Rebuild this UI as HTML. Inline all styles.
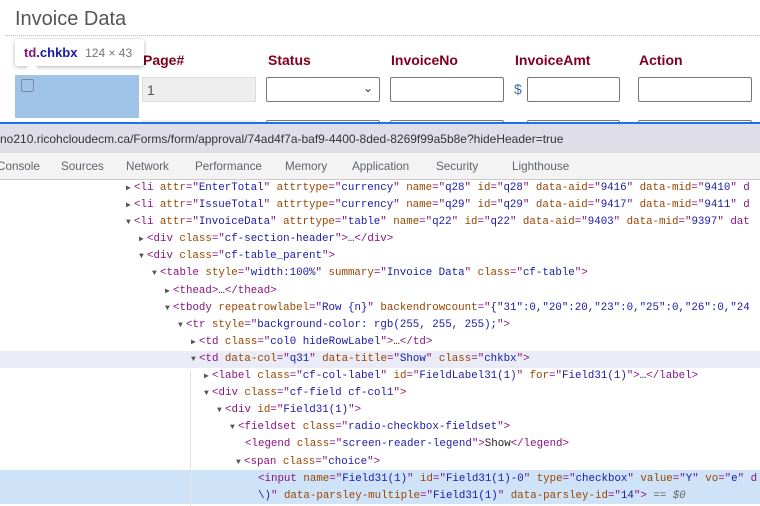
<!DOCTYPE html>
<html><head><meta charset="utf-8"><style>
*{margin:0;padding:0;box-sizing:border-box}
body{width:760px;height:506px;overflow:hidden;background:#fff;font-family:"Liberation Sans",sans-serif;position:relative}
.a{position:absolute}
h1{position:absolute;left:15px;top:8px;font-size:20px;font-weight:normal;color:#555}
.dot{position:absolute;left:5px;top:35px;width:755px;border-top:1px dotted #bbb}
.hd{position:absolute;top:52px;font-size:14px;font-weight:bold;color:#800020}
.in{position:absolute;height:25px;border:1px solid #777;border-radius:2px;background:#fff}
.url{position:absolute;left:0;top:122px;width:760px;height:31px;background:#dfdde8;border-top:2px solid #1a73e8;font-size:12px;color:#333;padding:8px 0 0 0;white-space:nowrap}
.tabs{position:absolute;left:0;top:153px;width:760px;height:27px;background:#f3f3f3;border-bottom:1px solid #ccc;font-size:11.7px;color:#5f6368}
.tabs span{position:absolute;top:7px}
.code{position:absolute;left:0;top:180px;width:760px;font-family:"Liberation Mono",monospace;font-size:10.8px;color:#222}
.l{height:17.1px;line-height:17.1px;position:relative;white-space:pre}
.t{color:#881280}.n{color:#994500}.v{color:#1a1aa6}
.tri{color:#555;font-size:8px;display:inline-block;width:8px}
</style></head><body>
<h1>Invoice Data</h1>
<div class="dot"></div>
<div class="hd" style="left:143px">Page#</div>
<div class="hd" style="left:268px">Status</div>
<div class="hd" style="left:391px">InvoiceNo</div>
<div class="hd" style="left:515px">InvoiceAmt</div>
<div class="hd" style="left:639px">Action</div>
<div class="a" style="left:15px;top:75px;width:124px;height:43px;background:#a0c4e8"></div>
<div class="a" style="left:21px;top:79px;width:13px;height:13px;border:1px solid #7a8aa0;border-radius:2px"></div>
<div class="a" style="left:142px;top:77px;width:114px;height:25px;background:#eee;border:1px solid #ddd;font-size:14px;color:#555;padding:4px 0 0 4px">1</div>
<div class="in" style="left:266px;top:77px;width:114px"><span style="position:absolute;right:6px;top:3px;font-size:12px;color:#333">&#8964;</span></div>
<div class="in" style="left:390px;top:77px;width:114px"></div>
<div class="a" style="left:514px;top:81px;font-size:14px;color:#3a6ea5">$</div>
<div class="in" style="left:527px;top:77px;width:93px"></div>
<div class="in" style="left:638px;top:77px;width:114px"></div>
<div class="a" style="left:142px;top:120px;width:114px;height:3px;background:#eee"></div>
<div class="in" style="left:266px;top:120px;width:114px"></div>
<div class="in" style="left:390px;top:120px;width:114px"></div>
<div class="in" style="left:527px;top:120px;width:93px"></div>
<div class="in" style="left:638px;top:120px;width:114px"></div>
<div class="a" style="left:15px;top:39px;width:129px;height:27px;background:#fff;border-radius:3px;box-shadow:0 1px 4px rgba(0,0,0,.3);font-size:13px;padding:6px 0 0 9px;white-space:nowrap"><b style="color:#881280">td</b><b style="color:#1a1aa6">.chkbx</b> <span style="color:#777;font-size:12px;margin-left:4px">124 × 43</span></div>
<div class="a" style="left:28px;top:64px;width:8px;height:8px;background:#fff;transform:rotate(45deg)"></div>
<div class="url">no210.ricohcloudecm.ca/Forms/form/approval/74ad4f7a-baf9-4400-8ded-8269f99a5b8e?hideHeader=true</div>
<div class="tabs"><span style="left:-3px">Console</span><span style="left:61px">Sources</span><span style="left:126px">Network</span><span style="left:195px">Performance</span><span style="left:285px">Memory</span><span style="left:352px">Application</span><span style="left:436px">Security</span><span style="left:512px">Lighthouse</span></div>
<div class="a" style="left:0;top:351px;width:760px;height:17px;background:#e9ebf7"></div>
<div class="a" style="left:0;top:470px;width:760px;height:34px;background:#cfe3f8"></div>
<div class="a" style="left:190px;top:370px;width:1px;height:136px;background:#e4e4e4"></div>
<div class="code"><div class="l" style="padding-left:126px"><span class="tri">▶</span><span class="t">&lt;li </span><span class="n">attr</span><span class="t">="</span><span class="v">EnterTotal</span><span class="t">" </span><span class="n">attrtype</span><span class="t">="</span><span class="v">currency</span><span class="t">" </span><span class="n">name</span><span class="t">="</span><span class="v">q28</span><span class="t">" </span><span class="n">id</span><span class="t">="</span><span class="v">q28</span><span class="t">" </span><span class="n">data-aid</span><span class="t">="</span><span class="v">9416</span><span class="t">" </span><span class="n">data-mid</span><span class="t">="</span><span class="v">9410</span><span class="t">" d</span></div><div class="l" style="padding-left:126px"><span class="tri">▶</span><span class="t">&lt;li </span><span class="n">attr</span><span class="t">="</span><span class="v">IssueTotal</span><span class="t">" </span><span class="n">attrtype</span><span class="t">="</span><span class="v">currency</span><span class="t">" </span><span class="n">name</span><span class="t">="</span><span class="v">q29</span><span class="t">" </span><span class="n">id</span><span class="t">="</span><span class="v">q29</span><span class="t">" </span><span class="n">data-aid</span><span class="t">="</span><span class="v">9417</span><span class="t">" </span><span class="n">data-mid</span><span class="t">="</span><span class="v">9411</span><span class="t">" d</span></div><div class="l" style="padding-left:126px"><span class="tri">▼</span><span class="t">&lt;li </span><span class="n">attr</span><span class="t">="</span><span class="v">InvoiceData</span><span class="t">" </span><span class="n">attrtype</span><span class="t">="</span><span class="v">table</span><span class="t">" </span><span class="n">name</span><span class="t">="</span><span class="v">q22</span><span class="t">" </span><span class="n">id</span><span class="t">="</span><span class="v">q22</span><span class="t">" </span><span class="n">data-aid</span><span class="t">="</span><span class="v">9403</span><span class="t">" </span><span class="n">data-mid</span><span class="t">="</span><span class="v">9397</span><span class="t">" dat</span></div><div class="l" style="padding-left:139px"><span class="tri">▶</span><span class="t">&lt;div </span><span class="n">class</span><span class="t">="</span><span class="v">cf-section-header</span><span class="t">"&gt;</span>…<span class="t">&lt;/div&gt;</span></div><div class="l" style="padding-left:139px"><span class="tri">▼</span><span class="t">&lt;div </span><span class="n">class</span><span class="t">="</span><span class="v">cf-table_parent</span><span class="t">"&gt;</span></div><div class="l" style="padding-left:152px"><span class="tri">▼</span><span class="t">&lt;table </span><span class="n">style</span><span class="t">="</span><span class="v">width:100%</span><span class="t">" </span><span class="n">summary</span><span class="t">="</span><span class="v">Invoice Data</span><span class="t">" </span><span class="n">class</span><span class="t">="</span><span class="v">cf-table</span><span class="t">"&gt;</span></div><div class="l" style="padding-left:165px"><span class="tri">▶</span><span class="t">&lt;thead&gt;</span>…<span class="t">&lt;/thead&gt;</span></div><div class="l" style="padding-left:165px"><span class="tri">▼</span><span class="t">&lt;tbody </span><span class="n">repeatrowlabel</span><span class="t">="</span><span class="v">Row {n}</span><span class="t">" </span><span class="n">backendrowcount</span><span class="t">="</span><span class="v">{"31":0,"20":20,"23":0,"25":0,"26":0,"24</span></div><div class="l" style="padding-left:178px"><span class="tri">▼</span><span class="t">&lt;tr </span><span class="n">style</span><span class="t">="</span><span class="v">background-color: rgb(255, 255, 255);</span><span class="t">"&gt;</span></div><div class="l" style="padding-left:191px"><span class="tri">▶</span><span class="t">&lt;td </span><span class="n">class</span><span class="t">="</span><span class="v">col0 hideRowLabel</span><span class="t">"&gt;</span>…<span class="t">&lt;/td&gt;</span></div><div class="l" style="padding-left:191px"><span class="tri">▼</span><span class="t">&lt;td </span><span class="n">data-col</span><span class="t">="</span><span class="v">q31</span><span class="t">" </span><span class="n">data-title</span><span class="t">="</span><span class="v">Show</span><span class="t">" </span><span class="n">class</span><span class="t">="</span><span class="v">chkbx</span><span class="t">"&gt;</span></div><div class="l" style="padding-left:204px"><span class="tri">▶</span><span class="t">&lt;label </span><span class="n">class</span><span class="t">="</span><span class="v">cf-col-label</span><span class="t">" </span><span class="n">id</span><span class="t">="</span><span class="v">FieldLabel31(1)</span><span class="t">" </span><span class="n">for</span><span class="t">="</span><span class="v">Field31(1)</span><span class="t">"&gt;</span>…<span class="t">&lt;/label&gt;</span></div><div class="l" style="padding-left:204px"><span class="tri">▼</span><span class="t">&lt;div </span><span class="n">class</span><span class="t">="</span><span class="v">cf-field cf-col1</span><span class="t">"&gt;</span></div><div class="l" style="padding-left:217px"><span class="tri">▼</span><span class="t">&lt;div </span><span class="n">id</span><span class="t">="</span><span class="v">Field31(1)</span><span class="t">"&gt;</span></div><div class="l" style="padding-left:230px"><span class="tri">▼</span><span class="t">&lt;fieldset </span><span class="n">class</span><span class="t">="</span><span class="v">radio-checkbox-fieldset</span><span class="t">"&gt;</span></div><div class="l" style="padding-left:245px"><span class="t">&lt;legend </span><span class="n">class</span><span class="t">="</span><span class="v">screen-reader-legend</span><span class="t">"&gt;</span>Show<span class="t">&lt;/legend&gt;</span></div><div class="l" style="padding-left:236px"><span class="tri">▼</span><span class="t">&lt;span </span><span class="n">class</span><span class="t">="</span><span class="v">choice</span><span class="t">"&gt;</span></div><div class="l" style="padding-left:258px"><span class="t">&lt;input </span><span class="n">name</span><span class="t">="</span><span class="v">Field31(1)</span><span class="t">" </span><span class="n">id</span><span class="t">="</span><span class="v">Field31(1)-0</span><span class="t">" </span><span class="n">type</span><span class="t">="</span><span class="v">checkbox</span><span class="t">" </span><span class="n">value</span><span class="t">="</span><span class="v">Y</span><span class="t">" </span><span class="n">vo</span><span class="t">="</span><span class="v">e</span><span class="t">" d</span></div><div class="l" style="padding-left:258px"><span class="v">\)</span><span class="t">" </span><span class="n">data-parsley-multiple</span><span class="t">="</span><span class="v">Field31(1)</span><span class="t">" </span><span class="n">data-parsley-id</span><span class="t">="</span><span class="v">14</span><span class="t">"&gt;</span> <span style="color:#666">== <i>$0</i></span></div></div>
</body></html>
